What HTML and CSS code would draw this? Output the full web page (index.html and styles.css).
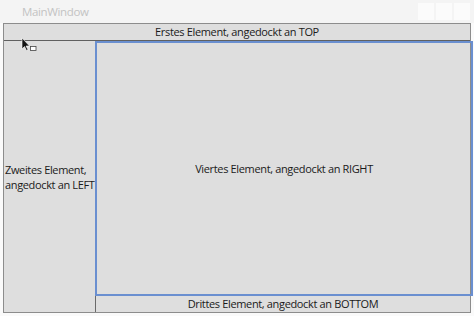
FILE: index.html
```
<!doctype html>
<html lang="de">
<head>
    <meta charset="UTF-8">
    <title>MainWindow</title>
    <link rel="stylesheet" href="styles.css">
</head>
<body>
    <div class="window">
        <!--Titelleiste-->
        <div class="titlebar">
            <span class="title">MainWindow</span>
            <div class="controls">
                <span></span>
                <span></span>
                <span></span>
            </div>
        </div>
        <!--DockPanel-->
        <div class="frame">
            <div class="top">Erstes Element, angedockt an TOP</div>
            <div class="middle">
                <div class="left">Zweites Element, angedockt an LEFT</div>
                <div class="rest">
                    <div class="right">Viertes Element, angedockt an RIGHT</div>
                    <div class="bottom">Drittes Element, angedockt an BOTTOM</div>
                </div>
            </div>
        </div>
        <!--Mauszeiger-->
        <svg class="cursor" width="16" height="16" viewBox="0 0 16 16">
            <path d="M1 1 L1 12 L3.5 9.5 L5.5 13.5 L7 12.8 L5 9 L8.5 9 Z" fill="#111" stroke="#fff" stroke-width="0.6"/>
            <rect x="9.5" y="9.5" width="5.5" height="4" fill="#fff" stroke="#444" stroke-width="0.8"/>
        </svg>
    </div>
</body>
</html>
```
FILE: styles.css
```
body{
    margin: 0;
    background: #fafafa;
    font-family: "Open Sans", "Noto Sans", sans-serif;
    font-size: 11px;
    letter-spacing: -0.35px;
    color: #1a1a1a;
}
.window{
    position: relative;
    width: 474px;
    height: 316px;
    display: flex;
    flex-direction: column;
}
/*Titelleiste*/
.titlebar{
    height: 23px;
    display: flex;
    align-items: center;
    justify-content: space-between;
    padding: 0 4px 0 22px;
    background: #f4f4f4;
}
.title{
    color: #c3c3c3;
    font-size: 11.5px;
    margin-top: -1px;
}
.controls{
    display: flex;
    gap: 2px;
}
.controls > span{
    width: 16px;
    height: 17px;
    background: #fbfbfb;
}
/*Rahmen*/
.frame{
    margin: 0 3px;
    height: 290px;
    box-sizing: border-box;
    border: 1px solid #8c8c8c;
    display: flex;
    flex-direction: column;
    background: #dedede;
}
.top{
    height: 17px;
    box-sizing: border-box;
    border-bottom: 1px solid #606060;
    text-align: center;
    line-height: 16px;
}
.middle{
    flex: 1;
    display: flex;
}
.left{
    width: 92px;
    box-sizing: border-box;
    border-right: 1px solid #6a6a6a;
    display: flex;
    align-items: center;
    padding: 0 0 0 1px;
    line-height: 15px;
}
.rest{
    flex: 1;
    display: flex;
    flex-direction: column;
    margin-right: -3px;
}
.right{
    flex: 1;
    box-sizing: border-box;
    border: 2px solid #6a8fd0;
    margin-left: -1px;
    display: flex;
    align-items: center;
    justify-content: center;
}
.bottom{
    height: 16px;
    margin-right: 3px;
    text-align: center;
    line-height: 15px;
}
/*Mauszeiger*/
.cursor{
    position: absolute;
    left: 21px;
    top: 37px;
}
```
